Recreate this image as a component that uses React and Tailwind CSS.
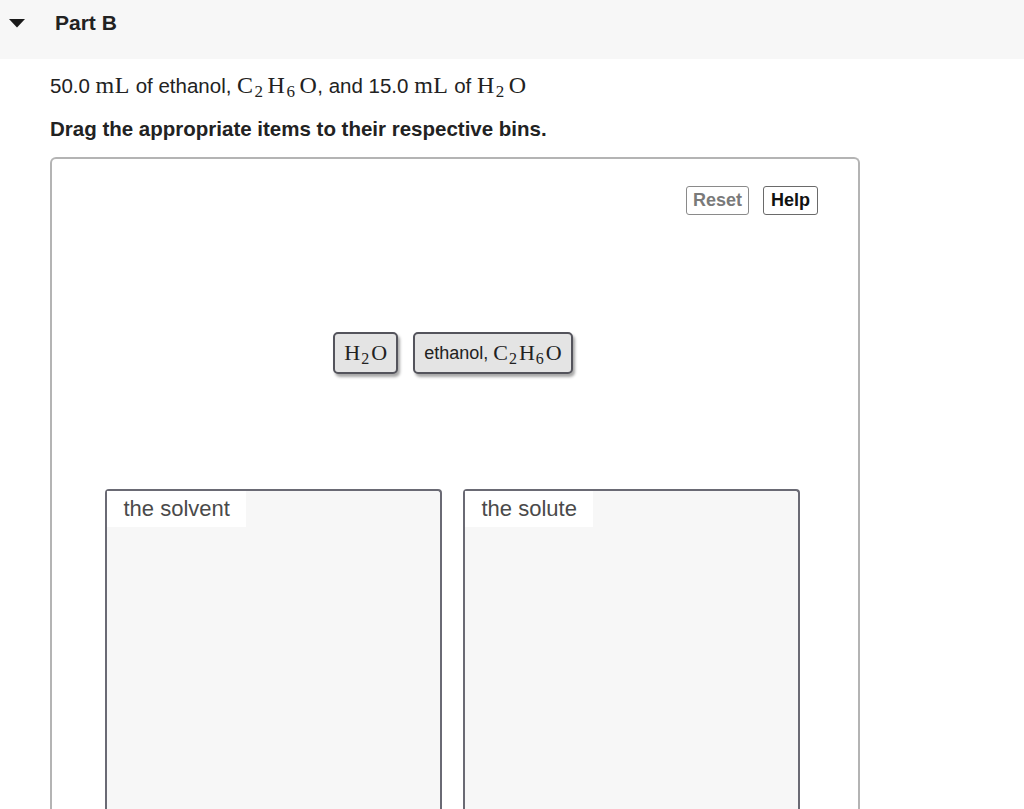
import React from 'react';

const sans = { fontFamily: '"Liberation Sans", Arial, Helvetica, sans-serif' };

const M = ({ children, size = 'text-[24px] tracking-[0.5px]' }) => (
  <span className={`font-['Liberation_Serif',serif] ${size} leading-none`}>{children}</span>
);

const Sub = ({ children, small }) => (
  <sub className={`${small ? 'text-[16px] mr-[2px]' : 'text-[17px] mr-[4px]'} !top-[4px] !bottom-auto ml-[1px]`}>{children}</sub>
);

const Water = ({ size, small }) => (
  <M size={size}>
    H<Sub small={small}>2</Sub>O
  </M>
);

const Ethanol = ({ size, small }) => (
  <M size={size}>
    C<Sub small={small}>2</Sub>H<Sub small={small}>6</Sub>O
  </M>
);

const Item = ({ children }) => (
  <div className="h-[42px] px-[9px] flex items-center bg-[#e4e4e4] border-2 border-[#54545c] rounded-[5px] shadow-[2px_3px_3px_rgba(0,0,0,0.35)] text-[18px] text-[#222]">
    {children}
  </div>
);

const Bin = ({ label }) => (
  <div className="w-[337px] h-[330px] bg-[#f7f7f7] border-2 border-[#6a6a74] rounded-[4px] border-b-0 rounded-b-none">
    <div className="inline-block bg-white pl-[17px] pr-[16px] h-[36px] leading-[36px] text-[22px] text-[#4a4a4a]">
      {label}
    </div>
  </div>
);

export default function App() {
  return (
    <div className="w-[1024px] h-[809px] overflow-hidden bg-white text-[#222]" style={sans}>
      <div className="h-[59px] bg-[#f7f7f7] flex items-center">
        <svg width="16" height="9" viewBox="0 0 16 9" className="ml-[9px] -mt-[13px]">
          <path d="M0 0 L16 0 L8 8.5 Z" fill="#1a1a1a" />
        </svg>
        <h2 className="ml-[30px] -mt-[13px] text-[21px] font-bold text-[#222]">Part B</h2>
      </div>

      <div className="pl-[50px]">
        <p className="mt-[13px] text-[20.5px] leading-[28px]">
          50.0 <M>mL</M> of ethanol, <Ethanol />, and 15.0 <M>mL</M> of <Water />
        </p>
        <p className="mt-[17px] text-[20.5px] font-bold leading-[24px]">
          Drag the appropriate items to their respective bins.
        </p>

        <div className="mt-[16px] w-[810px] h-[680px] border-2 border-[#b4b4b4] rounded-[6px] border-b-0 rounded-b-none">
          <div className="flex justify-end gap-[14px] pr-[40px] pt-[27px]">
            <button className="h-[29px] px-[6px] border border-[#8a8a8a] rounded-[3px] text-[18px] font-bold text-[#7a7a7a]">
              Reset
            </button>
            <button className="h-[29px] px-[7px] border border-[#6a6a6a] rounded-[3px] text-[18px] font-bold text-[#111]">
              Help
            </button>
          </div>

          <div className="flex justify-center gap-[15px] mt-[117px] pr-[4px]">
            <Item>
              <Water size="text-[22px]" small />
            </Item>
            <Item>
              <span>ethanol,&nbsp;</span>
              <Ethanol size="text-[22px]" small />
            </Item>
          </div>

          <div className="flex justify-center gap-[21px] mt-[115px] pr-[6px]">
            <Bin label="the solvent" />
            <Bin label="the solute" />
          </div>
        </div>
      </div>
    </div>
  );
}
